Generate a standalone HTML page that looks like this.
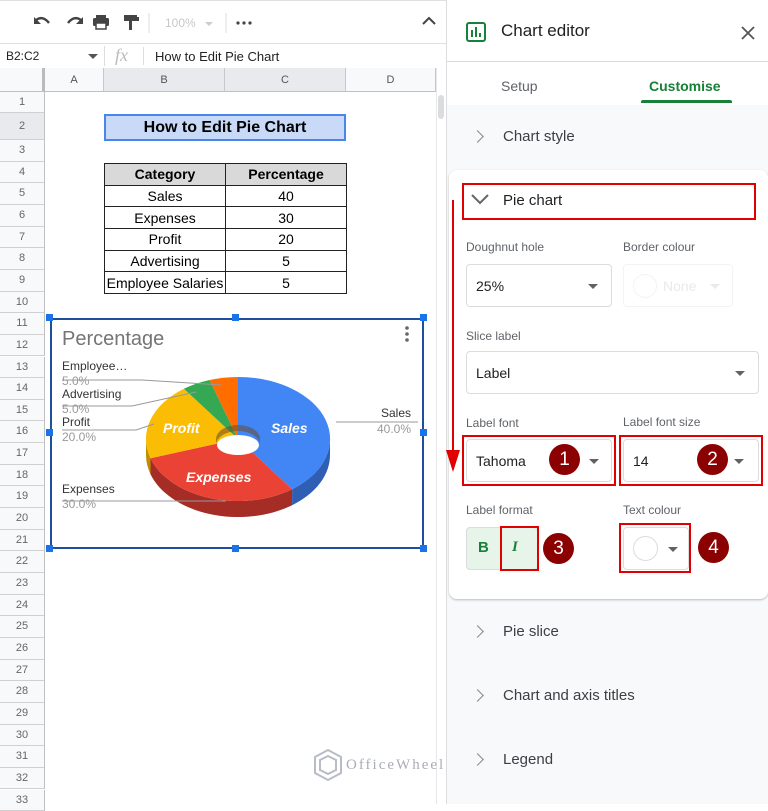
<!DOCTYPE html>
<html><head><meta charset="utf-8"><style>
*{box-sizing:border-box;margin:0;padding:0}
body{width:768px;height:804px;overflow:hidden;background:#fff;font-family:"Liberation Sans",Arial,sans-serif;position:relative}
.abs{position:absolute}
.rh{position:absolute;left:0;width:45px;background:#f8f9fa;border-bottom:1px solid #d0d0d0;border-right:1px solid #c0c0c0;font-size:11px;color:#666;text-align:center}
.ch{position:absolute;top:68px;height:24px;background:#f8f9fa;border-right:1px solid #c8c8c8;border-bottom:1px solid #c0c0c0;font-size:11px;color:#555;text-align:center;line-height:24px}
table.d{position:absolute;left:104px;top:163px;border-collapse:collapse;font-size:14px;color:#000}
table.d td{border:1px solid #222;height:21.7px;text-align:center;padding:0}
.lab{font-size:12px;color:#5f6368}
.sel{position:absolute;border:1px solid #dadce0;border-radius:4px;background:#fff;font-size:14px;color:#202124}
.caret{position:absolute;width:0;height:0;border-left:5px solid transparent;border-right:5px solid transparent;border-top:5px solid #5f6368}
.red{position:absolute;border:2.5px solid #e00000}
.num{position:absolute;width:31px;height:31px;border-radius:50%;background:#8b0000;color:#fff;font-size:19px;text-align:center;line-height:31px}
.sec{position:absolute;left:503px;font-size:15px;color:#3c4043}
.chev{position:absolute;left:473px;width:9px;height:9px;border-right:1.5px solid #888;border-top:1.5px solid #888;transform:rotate(45deg)}
</style></head><body>
<div class="abs" style="left:0;top:0;width:446px;height:44px;border-top:1px solid #e0e0e0;border-bottom:1px solid #e0e0e0;background:#fff"></div>
<svg class="abs" style="left:30px;top:12px" width="230" height="22" viewBox="0 0 230 22">
<path d="M6 8 Q13 3 19 11" stroke="#444" stroke-width="2.4" fill="none"/><path d="M4 5 L4 12 L11 12" fill="#444"/>
<path d="M51 8 Q44 3 38 11" stroke="#444" stroke-width="2.4" fill="none"/><path d="M53 5 L53 12 L46 12" fill="#444"/>
<rect x="63" y="6" width="16" height="8" rx="1.5" fill="#444"/><rect x="66" y="3" width="10" height="4" fill="#444"/><rect x="66" y="11" width="10" height="6" fill="#fff" stroke="#444" stroke-width="1.5"/>
<rect x="94" y="3" width="13" height="6" fill="#444"/><rect x="106" y="5" width="3" height="4" fill="#444"/><rect x="99" y="9" width="3" height="9" fill="#444"/>
<line x1="119" y1="1" x2="119" y2="21" stroke="#ddd"/>
<text x="135" y="15" font-size="12" fill="#c8c8c8" font-family="Liberation Sans">100%</text><path d="M175 10 l8 0 l-4 4z" fill="#ccc"/>
<line x1="196" y1="1" x2="196" y2="21" stroke="#ddd"/>
<circle cx="208" cy="11" r="1.6" fill="#444"/><circle cx="214" cy="11" r="1.6" fill="#444"/><circle cx="220" cy="11" r="1.6" fill="#444"/>
</svg>
<svg class="abs" style="left:420px;top:15px" width="18" height="12"><path d="M3 9 L9 3 L15 9" stroke="#444" stroke-width="2" fill="none"/></svg>
<div class="abs" style="left:0;top:44px;width:446px;height:24px;background:#fff;font-size:12px;color:#222">
<span class="abs" style="left:6px;top:5px">B2:C2</span>
<div class="caret" style="left:88px;top:10px;border-top-color:#555"></div>
<div class="abs" style="left:104px;top:2px;width:1px;height:20px;background:#ddd"></div>
<span class="abs" style="left:115px;top:1px;font-family:'Liberation Serif';font-style:italic;font-size:18px;color:#bbb">fx</span>
<div class="abs" style="left:143px;top:3px;width:1px;height:18px;background:#ddd"></div>
<span class="abs" style="left:155px;top:5px;font-size:13px">How to Edit Pie Chart</span>
</div>
<div class="ch" style="left:0;width:45px;border-right:3px solid #bbb"></div>
<div class="ch" style="left:45px;width:59px">A</div>
<div class="ch" style="left:104px;width:121px;background:#e8eaed">B</div>
<div class="ch" style="left:225px;width:121px;background:#e8eaed">C</div>
<div class="ch" style="left:346px;width:90px">D</div>
<div class="abs" style="left:436px;top:68px;width:10px;height:736px;background:#fff;border-left:1px solid #e8e8e8"></div>
<div class="abs" style="left:438px;top:95px;width:6px;height:24px;background:#dadce0;border-radius:3px"></div>
<div class="rh" style="top:92px;height:21px;line-height:21px">1</div>
<div class="rh" style="top:113px;height:27px;line-height:27px;background:#e8eaed">2</div>
<div class="rh" style="top:140.0px;height:21.65px;line-height:21px">3</div>
<div class="rh" style="top:161.65px;height:21.65px;line-height:21px">4</div>
<div class="rh" style="top:183.3px;height:21.65px;line-height:21px">5</div>
<div class="rh" style="top:204.95px;height:21.65px;line-height:21px">6</div>
<div class="rh" style="top:226.6px;height:21.65px;line-height:21px">7</div>
<div class="rh" style="top:248.25px;height:21.65px;line-height:21px">8</div>
<div class="rh" style="top:269.9px;height:21.65px;line-height:21px">9</div>
<div class="rh" style="top:291.55px;height:21.65px;line-height:21px">10</div>
<div class="rh" style="top:313.2px;height:21.65px;line-height:21px">11</div>
<div class="rh" style="top:334.85px;height:21.65px;line-height:21px">12</div>
<div class="rh" style="top:356.5px;height:21.65px;line-height:21px">13</div>
<div class="rh" style="top:378.15px;height:21.65px;line-height:21px">14</div>
<div class="rh" style="top:399.8px;height:21.65px;line-height:21px">15</div>
<div class="rh" style="top:421.45px;height:21.65px;line-height:21px">16</div>
<div class="rh" style="top:443.1px;height:21.65px;line-height:21px">17</div>
<div class="rh" style="top:464.75px;height:21.65px;line-height:21px">18</div>
<div class="rh" style="top:486.4px;height:21.65px;line-height:21px">19</div>
<div class="rh" style="top:508.05px;height:21.65px;line-height:21px">20</div>
<div class="rh" style="top:529.7px;height:21.65px;line-height:21px">21</div>
<div class="rh" style="top:551.35px;height:21.65px;line-height:21px">22</div>
<div class="rh" style="top:573.0px;height:21.65px;line-height:21px">23</div>
<div class="rh" style="top:594.65px;height:21.65px;line-height:21px">24</div>
<div class="rh" style="top:616.3px;height:21.65px;line-height:21px">25</div>
<div class="rh" style="top:637.95px;height:21.65px;line-height:21px">26</div>
<div class="rh" style="top:659.6px;height:21.65px;line-height:21px">27</div>
<div class="rh" style="top:681.25px;height:21.65px;line-height:21px">28</div>
<div class="rh" style="top:702.9px;height:21.65px;line-height:21px">29</div>
<div class="rh" style="top:724.55px;height:21.65px;line-height:21px">30</div>
<div class="rh" style="top:746.2px;height:21.65px;line-height:21px">31</div>
<div class="rh" style="top:767.85px;height:21.65px;line-height:21px">32</div>
<div class="rh" style="top:789.5px;height:21.65px;line-height:21px">33</div>
<div class="abs" style="left:104px;top:114px;width:242px;height:27px;background:#c9daf8;border:2px solid #4a86e8;font-weight:bold;font-size:16px;text-align:center;line-height:23px;color:#000">How to Edit Pie Chart</div>
<table class="d">
<tr style="background:#d9d9d9;font-weight:bold"><td style="width:121px">Category</td><td style="width:121px">Percentage</td></tr>
<tr><td>Sales</td><td>40</td></tr><tr><td>Expenses</td><td>30</td></tr><tr><td>Profit</td><td>20</td></tr><tr><td>Advertising</td><td>5</td></tr><tr><td style="white-space:nowrap">Employee Salaries</td><td>5</td></tr>
</table>
<div class="abs" style="left:50px;top:318px;width:374px;height:231px;border:2px solid #1f4e9c;background:#fff"></div>
<svg class="abs" style="left:46px;top:314px" width="382" height="240">
<g fill="#1a73e8"><rect x="0" y="0" width="7" height="7"/><rect x="186" y="0" width="7" height="7"/><rect x="374" y="0" width="7" height="7"/><rect x="0" y="115" width="7" height="7"/><rect x="374" y="115" width="7" height="7"/><rect x="0" y="231" width="7" height="7"/><rect x="186" y="231" width="7" height="7"/><rect x="374" y="231" width="7" height="7"/></g>
<text x="16" y="31" font-size="20" fill="#757575" font-family="Liberation Sans">Percentage</text>
<circle cx="361" cy="14" r="1.8" fill="#666"/><circle cx="361" cy="20" r="1.8" fill="#666"/><circle cx="361" cy="26" r="1.8" fill="#666"/>
<path d="M284 125 A92 62 0 0 1 246.1 175.2 L246.1 191.2 A92 62 0 0 0 284 141 Z" fill="#2f5fb5"/>
<path d="M246.1 175.2 A92 62 0 0 1 104.5 144.2 L104.5 160.2 A92 62 0 0 0 246.1 191.2 Z" fill="#a52d25"/>
<path d="M104.5 144.2 A92 62 0 0 1 100 125 L100 141 A92 62 0 0 0 104.5 160.2 Z" fill="#c08f00"/>
<path d="M192 125 L192 63 A92 62 0 0 1 246.1 175.2 Z" fill="#4285f4"/>
<path d="M192 125 L246.1 175.2 A92 62 0 0 1 104.5 144.2 Z" fill="#ea4335"/>
<path d="M192 125 L104.5 144.2 A92 62 0 0 1 137.9 74.8 Z" fill="#fbbc04"/>
<path d="M192 125 L137.9 74.8 A92 62 0 0 1 163.6 66 Z" fill="#34a853"/>
<path d="M192 125 L163.6 66 A92 62 0 0 1 192 63 Z" fill="#ff6d01"/>
<path d="M170 125 A22 14 0 0 1 214 125 L214 131 A22 14 0 0 0 170 131 Z" fill="#6b4a2a" opacity=".55"/>
<ellipse cx="192" cy="131" rx="21" ry="10" fill="#fff"/>
<g font-family="Liberation Sans" font-weight="bold" font-style="italic" fill="#fff" font-size="14"><text x="225" y="119">Sales</text><text x="117" y="119">Profit</text><text x="140" y="168">Expenses</text></g>
<g stroke="#999" fill="none" stroke-width="1"><path d="M16 66 L96 66 L176 71"/><path d="M16 92 L86 92 L150 78"/><path d="M16 116 L90 116 L108 110"/><path d="M16 187 L180 187"/><path d="M372 108 L290 108"/></g>
<g font-family="Liberation Sans" font-size="12"><text x="16" y="56" fill="#333">Employee…</text><text x="16" y="71" fill="#999">5.0%</text><text x="16" y="84" fill="#333">Advertising</text><text x="16" y="99" fill="#999">5.0%</text><text x="16" y="112" fill="#333">Profit</text><text x="16" y="127" fill="#999">20.0%</text><text x="16" y="179" fill="#333">Expenses</text><text x="16" y="194" fill="#999">30.0%</text><text x="365" y="103" fill="#333" text-anchor="end">Sales</text><text x="365" y="119" fill="#999" text-anchor="end">40.0%</text></g>
</svg>
<div class="abs" style="left:446px;top:0;width:322px;height:804px;background:#f8f9fa;border-left:1px solid #dadce0"></div>
<div class="abs" style="left:447px;top:0;width:321px;height:105px;background:#fff"></div>
<div class="abs" style="left:447px;top:61px;width:321px;height:1px;background:#dadce0"></div>
<svg class="abs" style="left:466px;top:22px" width="20" height="20"><rect x="1" y="1" width="18" height="18" rx="2" fill="none" stroke="#188038" stroke-width="2"/><rect x="5" y="8" width="2" height="7" fill="#188038"/><rect x="9" y="5" width="2" height="10" fill="#188038"/><rect x="13" y="11" width="2" height="4" fill="#188038"/></svg>
<div class="abs" style="left:501px;top:21px;font-size:17px;color:#202124">Chart editor</div>
<svg class="abs" style="left:741px;top:26px" width="14" height="14"><path d="M1 1L13 13M13 1L1 13" stroke="#555" stroke-width="1.8"/></svg>
<div class="abs" style="left:501px;top:78px;font-size:14px;color:#5f6368">Setup</div>
<div class="abs" style="left:649px;top:78px;font-size:14px;font-weight:bold;color:#188038">Customise</div>
<div class="abs" style="left:641px;top:100px;width:91px;height:3px;background:#188038;border-radius:2px 2px 0 0"></div>
<div class="chev" style="top:132px"></div><div class="sec" style="top:128px">Chart style</div>
<div class="abs" style="left:449px;top:170px;width:319px;height:429px;background:#fff;border-radius:8px;box-shadow:0 1px 2px rgba(0,0,0,.25)"></div>
<svg class="abs" style="left:470px;top:193px" width="20" height="12"><path d="M2 2L10 10L18 2" stroke="#666" stroke-width="2" fill="none"/></svg>
<div class="abs" style="left:503px;top:192px;font-size:15px;color:#202124">Pie chart</div>
<div class="red" style="left:462px;top:183px;width:294px;height:37px"></div>
<div class="abs" style="left:452px;top:200px;width:2px;height:255px;background:#e00000"></div>
<svg class="abs" style="left:446px;top:450px" width="14" height="22"><path d="M0 0L14 0L7 22Z" fill="#e00000"/></svg>
<div class="abs lab" style="left:466px;top:240px">Doughnut hole</div>
<div class="abs lab" style="left:623px;top:240px">Border colour</div>
<div class="sel" style="left:466px;top:264px;width:146px;height:43px"><span class="abs" style="left:9px;top:13px">25%</span><div class="caret" style="left:121px;top:19px"></div></div>
<div class="sel" style="left:623px;top:264px;width:110px;height:43px;border-color:#f1f3f4"><div class="abs" style="left:9px;top:9px;width:24px;height:24px;border-radius:50%;border:1px solid #f1f3f4"></div><span class="abs" style="left:39px;top:13px;color:#e8eaed">None</span><div class="caret" style="left:86px;top:19px;border-top-color:#e8eaed"></div></div>
<div class="abs lab" style="left:466px;top:329px">Slice label</div>
<div class="sel" style="left:466px;top:351px;width:293px;height:43px"><span class="abs" style="left:9px;top:13px">Label</span><div class="caret" style="left:268px;top:19px"></div></div>
<div class="abs lab" style="left:466px;top:416px">Label font</div>
<div class="abs lab" style="left:623px;top:415px">Label font size</div>
<div class="sel" style="left:466px;top:439px;width:146px;height:43px"><span class="abs" style="left:9px;top:13px">Tahoma</span><div class="caret" style="left:122px;top:19px"></div></div>
<div class="red" style="left:462px;top:435px;width:154px;height:51px"></div>
<div class="num" style="left:549px;top:444px">1</div>
<div class="sel" style="left:623px;top:439px;width:136px;height:43px"><span class="abs" style="left:9px;top:13px">14</span><div class="caret" style="left:110px;top:19px"></div></div>
<div class="red" style="left:619px;top:435px;width:144px;height:51px"></div>
<div class="num" style="left:697px;top:444px">2</div>
<div class="abs lab" style="left:466px;top:503px">Label format</div>
<div class="abs lab" style="left:623px;top:503px">Text colour</div>
<div class="abs" style="left:466px;top:527px;width:72px;height:43px;border:1px solid #dadce0;border-radius:4px;background:#e6f4ea"></div>
<div class="abs" style="left:478px;top:539px;font-size:15px;font-weight:bold;color:#188038">B</div>
<div class="abs" style="left:512px;top:539px;font-size:15px;font-weight:bold;font-style:italic;font-family:'Liberation Serif';color:#188038">I</div>
<div class="red" style="left:500px;top:526px;width:39px;height:45px"></div>
<div class="num" style="left:543px;top:533px">3</div>
<div class="sel" style="left:623px;top:527px;width:66px;height:43px"><div class="abs" style="left:9px;top:8px;width:25px;height:25px;border-radius:50%;border:1px solid #dadce0"></div><div class="caret" style="left:44px;top:19px"></div></div>
<div class="red" style="left:619px;top:523px;width:72px;height:50px"></div>
<div class="num" style="left:698px;top:532px">4</div>
<div class="chev" style="top:627px"></div><div class="sec" style="top:623px">Pie slice</div>
<div class="chev" style="top:691px"></div><div class="sec" style="top:687px">Chart and axis titles</div>
<div class="chev" style="top:755px"></div><div class="sec" style="top:751px">Legend</div>
<svg class="abs" style="left:312px;top:748px" width="32" height="34"><path d="M16 2 L29 9 L29 25 L16 32 L3 25 L3 9Z M16 8 L24 12 L24 22 L16 26 L8 22 L8 12Z" fill="none" stroke="#b8bcc4" stroke-width="2"/></svg>
<div class="abs" style="left:346px;top:757px;font-family:'Liberation Serif';font-size:15px;letter-spacing:2px;color:#a9adb5">OfficeWheel</div>
</body></html>
